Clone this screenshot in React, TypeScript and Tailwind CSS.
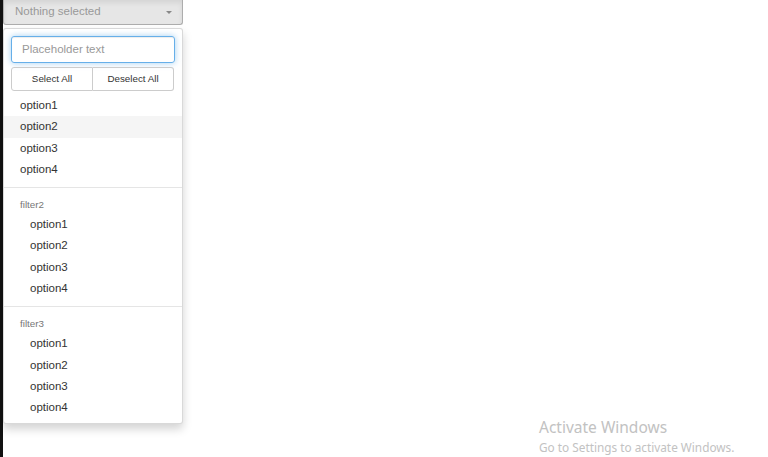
import React from "react";

const font = { fontFamily: '"Liberation Sans", Arial, sans-serif' };

function Option({ label, indent, active }: { label: string; indent?: boolean; active?: boolean }) {
  return (
    <div
      className={`h-[21.3px] leading-[21.3px] text-[11.5px] text-[#333] ${indent ? "pl-[26px]" : "pl-[16px]"} ${active ? "bg-[#f5f5f5]" : ""}`}
    >
      {label}
    </div>
  );
}

function Header({ label }: { label: string }) {
  return <div className="h-[19px] leading-[19px] pl-[16px] text-[9.8px] text-[#777]">{label}</div>;
}

function Divider() {
  return <div className="my-[7px] h-px bg-[#e5e5e5]" />;
}

export default function App() {
  const opts = ["option1", "option2", "option3", "option4"];
  return (
    <div className="relative flex w-[768px] h-[457px] bg-white overflow-hidden" style={font}>
      <div className="w-[3px] h-full bg-[#111]" />
      <div className="flex flex-col w-[180px]">
        <div className="h-[25px] flex items-center justify-between pl-[11px] pr-[10px] bg-[#e6e6e6] border border-t-0 border-[#adadad] rounded-b-[3px] shadow-[inset_0_3px_5px_rgba(0,0,0,0.08)]">
          <span className="text-[11.5px] text-[#999]">Nothing selected</span>
          <span className="w-0 h-0 border-l-[3.5px] border-r-[3.5px] border-t-[3.5px] border-l-transparent border-r-transparent border-t-[#888]" />
        </div>
        <div className="mt-[3px] bg-white border border-[rgba(0,0,0,0.15)] rounded-[3px] shadow-[0_5px_10px_rgba(0,0,0,0.175)] pt-[7px] pb-[4px]">
          <div className="px-[7px]">
            <div className="h-[27px] flex items-center pl-[10px] border border-[#66afe9] rounded-[3px] shadow-[inset_0_1px_1px_rgba(0,0,0,0.075),0_0_6px_rgba(102,175,233,0.6)] text-[11.5px] text-[#999]">
              Placeholder text
            </div>
            <div className="mt-[4px] flex h-[24px] mr-px">
              <div className="flex-1 flex items-center justify-center border border-[#ccc] rounded-l-[3px] text-[9.8px] text-[#333]">
                Select All
              </div>
              <div className="flex-1 flex items-center justify-center border border-l-0 border-[#ccc] rounded-r-[3px] text-[9.8px] text-[#333]">
                Deselect All
              </div>
            </div>
          </div>
          <div className="mt-[4px]">
            {opts.map((o) => (
              <Option key={o} label={o} active={o === "option2"} />
            ))}
          </div>
          <Divider />
          <Header label="filter2" />
          {opts.map((o) => (
            <Option key={o} label={o} indent />
          ))}
          <Divider />
          <Header label="filter3" />
          {opts.map((o) => (
            <Option key={o} label={o} indent />
          ))}
        </div>
      </div>
      <div
        className="absolute left-[539px] top-[420px] text-[#c2c2c2] leading-none"
        style={{ fontFamily: '"Noto Sans", "Open Sans", sans-serif' }}
      >
        <div className="text-[15.5px]">Activate Windows</div>
        <div className="mt-[6px] text-[11.8px]">Go to Settings to activate Windows.</div>
      </div>
    </div>
  );
}
